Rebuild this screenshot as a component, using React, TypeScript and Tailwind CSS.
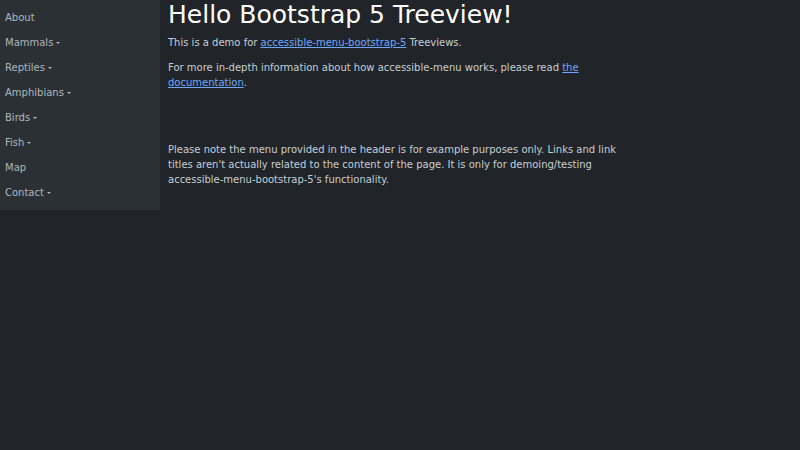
const menu = [
    { label: "About", dropdown: false },
    { label: "Mammals", dropdown: true },
    { label: "Reptiles", dropdown: true },
    { label: "Amphibians", dropdown: true },
    { label: "Birds", dropdown: true },
    { label: "Fish", dropdown: true },
    { label: "Map", dropdown: false },
    { label: "Contact", dropdown: true },
]

export default function App() {
    return (
        <div className="flex items-start min-h-[450px] bg-[#212529] text-[#dee2e6] font-['DejaVu_Sans',sans-serif]">
            <nav className="w-[160px] shrink-0 bg-[#2b3035] pt-[5px] pb-[5px]">
                <ul>
                    {menu.map((item) => (
                        <li key={item.label}>
                            <a href="#" className="flex items-center h-[25px] px-[5px] text-[10px] text-[#dee2e6]/75">
                                {item.label}
                                {item.dropdown && (
                                    <span className="ml-[3px] w-0 h-0 border-x-[2.5px] border-x-transparent border-t-[2.5px] border-t-current" />
                                )}
                            </a>
                        </li>
                    ))}
                </ul>
            </nav>

            <main className="px-[8px] w-[476px] text-[10px] leading-[15px] text-[#dee2e6]/90">
                <h1 className="text-[25px] leading-[30px] font-normal text-white">Hello Bootstrap 5 Treeview!</h1>
                <p className="mt-[5px]">
                    This is a demo for <a href="#" className="text-[#6ea8fe] underline">accessible-menu-bootstrap-5</a> Treeviews.
                </p>
                <p className="mt-[10px]">
                    For more in-depth information about how accessible-menu works, please read{" "}
                    <a href="#" className="text-[#6ea8fe] underline">the documentation</a>.
                </p>
                <p className="mt-[52px]">
                    Please note the menu provided in the header is for example purposes only. Links and link titles aren't actually related to the content of the page. It is only for demoing/testing accessible-menu-bootstrap-5's functionality.
                </p>
            </main>
        </div>
    )
}
